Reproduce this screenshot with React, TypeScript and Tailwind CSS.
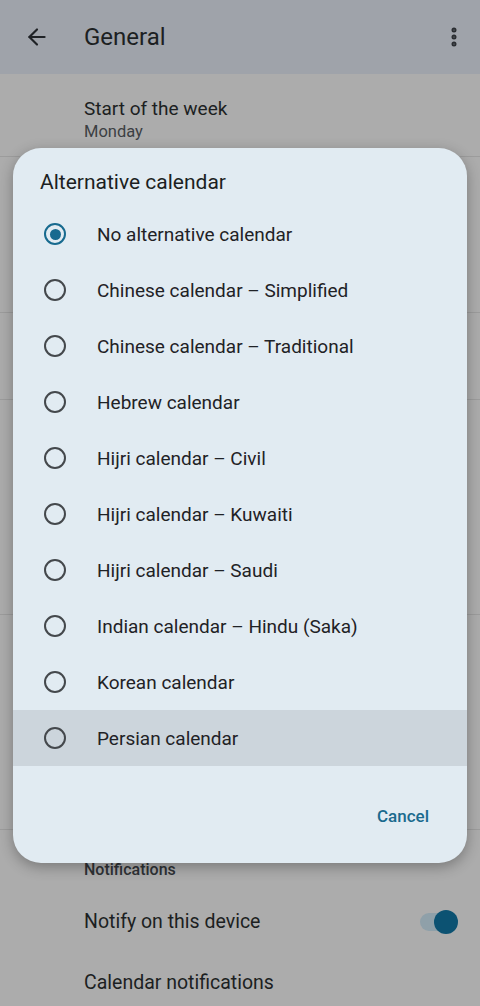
import { ArrowLeft, EllipsisVertical } from "lucide-react";

const options = [
  "No alternative calendar",
  "Chinese calendar – Simplified",
  "Chinese calendar – Traditional",
  "Hebrew calendar",
  "Hijri calendar – Civil",
  "Hijri calendar – Kuwaiti",
  "Hijri calendar – Saudi",
  "Indian calendar – Hindu (Saka)",
  "Korean calendar",
  "Persian calendar",
];

function Radio({ checked }: { checked: boolean }) {
  if (checked) {
    return (
      <span className="flex h-[22px] w-[22px] items-center justify-center rounded-full border-[2.5px] border-[#176a8f]">
        <span className="h-[11px] w-[11px] rounded-full bg-[#176a8f]" />
      </span>
    );
  }
  return <span className="h-[22px] w-[22px] rounded-full border-[2.5px] border-[#44484c]" />;
}

export default function App() {
  return (
    <div
      className="relative h-[1006px] w-[480px] overflow-hidden bg-[#acacac] text-[#1c1f22]"
      style={{ fontFamily: "Roboto, 'Noto Sans', sans-serif" }}
    >
      {/* settings page behind the scrim */}
      <div className="flex h-[74px] items-center bg-[#9fa3aa] pl-[24px] pr-[14px]">
        <ArrowLeft className="h-[26px] w-[26px] text-[#1f2226]" strokeWidth={2} />
        <span className="ml-[34px] text-[24px]">General</span>
        <EllipsisVertical className="ml-auto h-[24px] w-[24px] text-[#2a2d31]" strokeWidth={3} />
      </div>
      <div className="flex h-[83px] flex-col justify-center border-b border-[#9c9c9c] pl-[84px] pt-[10px]">
        <span className="text-[19px] leading-[24px]">Start of the week</span>
        <span className="text-[16.5px] leading-[22px] text-[#3c3f43]">Monday</span>
      </div>
      <div className="h-[156px] border-b border-[#9c9c9c]" />
      <div className="h-[87px] border-b border-[#9c9c9c]" />
      <div className="h-[215px] border-b border-[#9c9c9c]" />
      <div className="h-[215px] border-b border-[#9c9c9c]" />
      <div className="pl-[84px] pr-[22px]">
        <div className="pt-[30px] text-[16px] font-medium leading-[20px] text-[#2f3236]">Notifications</div>
        <div className="flex h-[61px] items-center pt-[23px]">
          <span className="text-[19.5px]">Notify on this device</span>
          <span className="relative ml-auto flex h-[24px] w-[38px] items-center">
            <span className="h-[18px] w-[34px] rounded-full bg-[#8fa0a9]" />
            <span className="absolute right-0 h-[24px] w-[24px] rounded-full bg-[#0c5272]" />
          </span>
        </div>
        <div className="pt-[27px] text-[19.5px]">Calendar notifications</div>
      </div>

      {/* dialog */}
      <div className="absolute left-[13px] top-[148px] w-[454px] overflow-hidden rounded-[28px] bg-[#e1ebf2] shadow-[0_4px_14px_rgba(0,0,0,0.3)]">
        <div className="px-[27px] pt-[20px] text-[21px] leading-[28px] text-[#1c1f22]">Alternative calendar</div>
        <div className="mt-[10px] flex flex-col">
          {options.map((o, i) => (
            <div
              key={o}
              className={`flex h-[56px] items-center pl-[31px] ${i === options.length - 1 ? "bg-[#ccd5dc]" : ""}`}
            >
              <Radio checked={i === 0} />
              <span className="ml-[31px] pt-[2px] text-[19px] text-[#1f2226]">{o}</span>
            </div>
          ))}
        </div>
        <div className="flex justify-end pb-[35px] pr-[38px] pt-[38px]">
          <span className="text-[17px] font-medium leading-[24px] text-[#1a6a8e]">Cancel</span>
        </div>
      </div>
    </div>
  );
}
